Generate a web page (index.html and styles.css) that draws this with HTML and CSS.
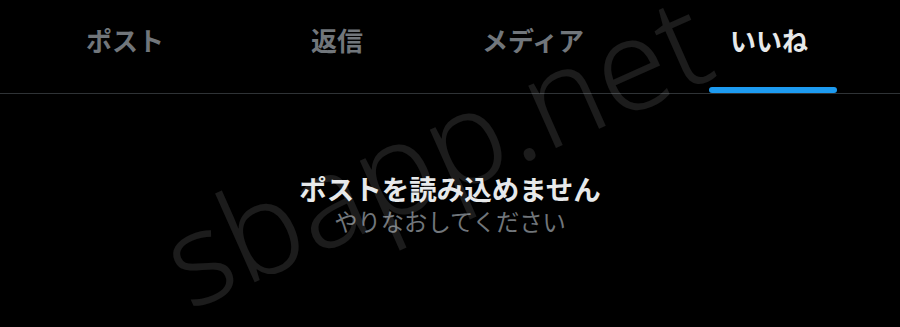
FILE: index.html
```html
<!DOCTYPE html>
<html lang="ja">
<head>
<meta charset="utf-8">
<link rel="stylesheet" href="styles.css">
</head>
<body>
<div class="screen">
  <nav class="tabs">
    <div class="tab tab-1">ポスト</div>
    <div class="tab tab-2">返信</div>
    <div class="tab tab-3">メディア</div>
    <div class="tab tab-4 active">いいね<span class="indicator"></span></div>
  </nav>
  <main class="empty">
    <h2 class="title">ポストを読み込めません</h2>
    <p class="sub">やりなおしてください</p>
  </main>
  <div class="watermark">sbapp.net</div>
</div>
</body>
</html>
```
FILE: styles.css
```css
html, body {
  margin: 0;
  padding: 0;
  background: #000;
}
.screen {
  position: relative;
  width: 900px;
  height: 327px;
  overflow: hidden;
  background: #000;
  font-family: "Noto Sans CJK JP", "Noto Sans", sans-serif;
}
.tabs {
  display: grid;
  grid-template-columns: 250px 174px 218px 258px;
  height: 93px;
  border-bottom: 1px solid #2f3336;
}
.tab {
  position: relative;
  display: flex;
  align-items: center;
  justify-content: center;
  padding-bottom: 14px;
  box-sizing: border-box;
  font-size: 26px;
  font-weight: 700;
  color: #71767b;
}
.tab-4 { padding-right: 4px; }
.tab.active { color: #e7e9ea; }
.indicator {
  position: absolute;
  left: 67px;
  bottom: 0;
  width: 128px;
  height: 6px;
  border-radius: 3px;
  background: #1d9bf0;
}
.empty {
  display: flex;
  flex-direction: column;
  align-items: center;
  padding-top: 77px;
}
.title {
  margin: 0;
  font-size: 27.5px;
  font-weight: 700;
  line-height: 34px;
  color: #e7e9ea;
}
.sub {
  margin: 0;
  font-size: 23.3px;
  font-weight: 400;
  line-height: 32px;
  color: #71767b;
}
.watermark {
  position: absolute;
  left: 190px;
  top: 198px;
  font-family: "Noto Sans", sans-serif;
  font-weight: 300;
  font-size: 128px;
  line-height: 1;
  color: rgba(255,255,255,0.11);
  transform: rotate(-24deg);
  transform-origin: 0 114px;
  pointer-events: none;
  white-space: nowrap;
}
```
